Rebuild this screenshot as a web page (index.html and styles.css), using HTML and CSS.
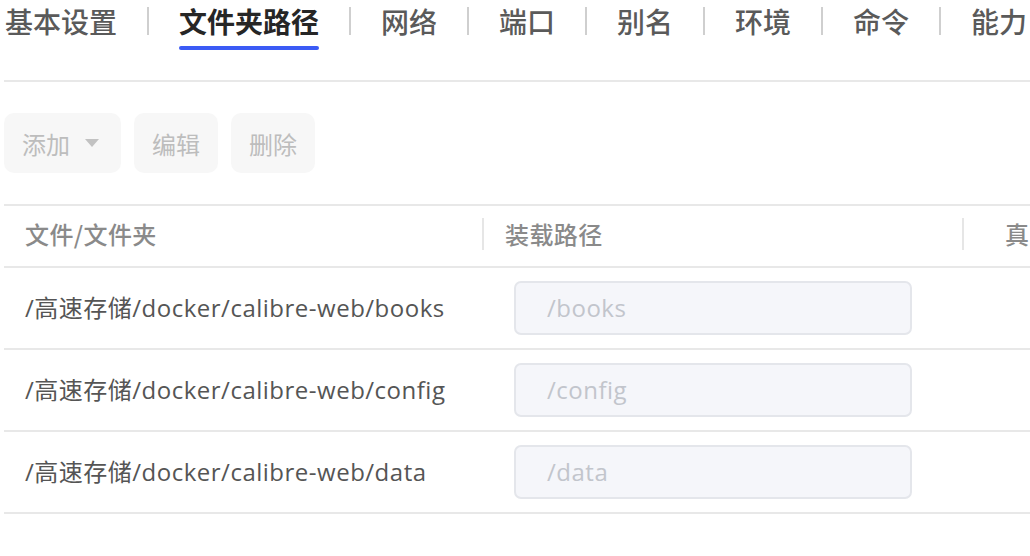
FILE: index.html
```html
<!DOCTYPE html>
<html lang="zh-CN">
<head>
<meta charset="utf-8">
<link rel="stylesheet" href="styles.css">
</head>
<body>
<div class="page">
  <nav class="tabs">
    <div class="tab">基本设置</div>
    <div class="sep"></div>
    <div class="tab active"><span>文件夹路径</span><div class="bar"></div></div>
    <div class="sep"></div>
    <div class="tab">网络</div>
    <div class="sep"></div>
    <div class="tab">端口</div>
    <div class="sep"></div>
    <div class="tab">别名</div>
    <div class="sep"></div>
    <div class="tab">环境</div>
    <div class="sep"></div>
    <div class="tab">命令</div>
    <div class="sep"></div>
    <div class="tab">能力</div>
  </nav>

  <div class="toolbar">
    <button class="btn btn-add">添加 <svg class="caret" width="16" height="10" viewBox="0 0 16 10"><path d="M1 1h14L8 9z" fill="#c2c2c2"/></svg></button>
    <button class="btn">编辑</button>
    <button class="btn">删除</button>
  </div>

  <div class="table">
    <div class="row head">
      <div class="cell">文件/文件夹</div>
      <div class="cell">装载路径</div>
      <div class="cell last">真</div>
    </div>
    <div class="row">
      <div class="cell">/高速存储/docker/calibre-web/books</div>
      <div class="cell"><div class="input">/books</div></div>
      <div class="cell"></div>
    </div>
    <div class="row">
      <div class="cell">/高速存储/docker/calibre-web/config</div>
      <div class="cell"><div class="input">/config</div></div>
      <div class="cell"></div>
    </div>
    <div class="row">
      <div class="cell">/高速存储/docker/calibre-web/data</div>
      <div class="cell"><div class="input">/data</div></div>
      <div class="cell"></div>
    </div>
  </div>
</div>
</body>
</html>
```

FILE: styles.css
```css
html, body {
  margin: 0;
  padding: 0;
  background: #ffffff;
  overflow: hidden;
}

body {
  font-family: "Open Sans", "Noto Sans CJK SC", sans-serif;
  width: 1030px;
  height: 556px;
}

.page {
  padding-left: 4px;
}

.tabs {
  display: flex;
  align-items: flex-start;
  height: 80px;
  border-bottom: 2px solid #e8e8e8;
  padding-left: 1px;
  white-space: nowrap;
}

.tab {
  font-family: "Noto Sans CJK SC", sans-serif;
  font-size: 28px;
  line-height: 42px;
  font-weight: 500;
  color: #5a5a5a;
  display: flex;
  flex-direction: column;
}

.tab.active {
  color: #262626;
  font-weight: 700;
}

.tab .bar {
  height: 4px;
  margin-top: 4px;
  border-radius: 2px;
  background: #3b5bf5;
}

.sep {
  flex: none;
  width: 2px;
  height: 28px;
  margin: 7px 30px 0 30px;
  background: #cfcfcf;
}

.toolbar {
  display: flex;
  gap: 13px;
  margin-top: 31px;
}

.btn {
  height: 60px;
  padding: 0 18px;
  border: none;
  border-radius: 10px;
  background: #f7f7f7;
  color: #bdbdbd;
  font-family: "Noto Sans CJK SC", sans-serif;
  font-size: 24px;
  display: flex;
  align-items: center;
  gap: 14px;
}

.btn-add {
  width: 117px;
}

.caret {
  display: block;
}

.table {
  margin-top: 31px;
  border-top: 2px solid #e8e8e8;
}

.row {
  display: grid;
  grid-template-columns: 480px 480px 1fr;
  height: 80px;
  border-bottom: 2px solid #e8e8e8;
  align-items: center;
}

.row.head {
  height: 60px;
}

.cell {
  padding-left: 21px;
  font-size: 24px;
  line-height: 34px;
  letter-spacing: 0.5px;
  color: #555555;
  white-space: nowrap;
}

.head .cell {
  font-family: "Noto Sans CJK SC", sans-serif;
  color: #8a8a8a;
  border-right: 2px solid #e6e6e6;
  font-weight: 500;
  letter-spacing: 0.4px;
  line-height: 32px;
  margin-bottom: 4px;
}

.head .cell.last {
  border-right: none;
  padding-left: 41px;
}

.input {
  width: 398px;
  height: 54px;
  margin-left: 9px;
  box-sizing: border-box;
  border: 2px solid #e4e6eb;
  border-radius: 7px;
  background: #f5f6fa;
  color: #c2c5cc;
  font-size: 24px;
  letter-spacing: 0.5px;
  padding-left: 31px;
  display: flex;
  align-items: center;
}
```
